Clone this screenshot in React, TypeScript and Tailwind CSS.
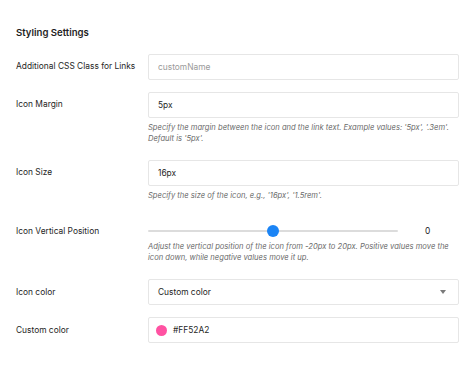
import React, { useState } from 'react';

const Help = ({ children }: { children: React.ReactNode }) => (
  <p className="text-[7.6px] italic leading-[11px] text-[#6b6b6b]">{children}</p>
);

const Row = ({ label, children, className = '' }: { label: string; children: React.ReactNode; className?: string }) => (
  <div className={`flex h-[26px] items-center ${className}`}>
    <label className="w-[132px] shrink-0 text-[8.4px] leading-[11px] text-[#1e1e1e]">{label}</label>
    <div className="flex-1">{children}</div>
  </div>
);

export default function App() {
  const [position, setPosition] = useState(0);
  const pct = ((position + 20) / 40) * 100;

  return (
    <div className="w-[474px] h-[376px] bg-white pl-4 pr-[15px] pt-[25px]" style={{ fontFamily: 'Inter, "Liberation Sans", sans-serif' }}>
      <h2 className="text-[9.6px] font-semibold leading-4 text-[#1e1e1e]">Styling Settings</h2>

      <Row label="Additional CSS Class for Links" className="mt-3">
        <input
          className="h-[26px] w-full rounded-[2px] border border-[#e6e6e6] px-[9px] text-[8.4px] text-[#1e1e1e] placeholder:text-[#9a9a9a] outline-none"
          placeholder="customName"
        />
      </Row>

      <Row label="Icon Margin" className="mt-3">
        <input
          className="h-[26px] w-full rounded-[2px] border border-[#e6e6e6] px-[9px] text-[8.4px] text-[#1e1e1e] outline-none"
          defaultValue="5px"
        />
      </Row>
      <div className="ml-[132px] mt-[5px]">
        <Help>Specify the margin between the icon and the link text. Example values: '5px', '.3em'. Default is '5px'.</Help>
      </div>

      <Row label="Icon Size" className="mt-[15px]">
        <input
          className="h-[26px] w-full rounded-[2px] border border-[#e6e6e6] px-[9px] text-[8.4px] text-[#1e1e1e] outline-none"
          defaultValue="16px"
        />
      </Row>
      <div className="ml-[132px] mt-[5px]">
        <Help>Specify the size of the icon, e.g., '16px', '1.5rem'.</Help>
      </div>

      <div className="mt-[17px] flex h-[26px] items-center">
        <label className="w-[132px] shrink-0 text-[8.4px] leading-[11px] text-[#1e1e1e]">Icon Vertical Position</label>
        <div className="flex h-4 items-center">
          <div className="relative h-4 w-[250px]">
            <div className="absolute left-0 right-0 top-[7px] h-[2px] rounded-full bg-[#dcdcdc]" />
            <div
              className="absolute top-[2px] h-3 w-3 -translate-x-1/2 rounded-full bg-[#1b84f5]"
              style={{ left: `calc(6px + (100% - 12px) * ${pct / 100})` }}
            />
            <input
              type="range"
              min={-20}
              max={20}
              value={position}
              onChange={(e) => setPosition(Number(e.target.value))}
              className="absolute inset-0 w-full opacity-0"
            />
          </div>
          <span className="ml-[27px] text-[8.4px] text-[#1e1e1e]">{position}</span>
        </div>
      </div>
      <div className="ml-[132px] -mt-[3px]">
        <Help>Adjust the vertical position of the icon from -20px to 20px. Positive values move the icon down, while negative values move it up.</Help>
      </div>

      <Row label="Icon color" className="mt-4">
        <div className="flex h-[26px] w-full items-center justify-between rounded-[2px] border border-[#e6e6e6] pl-[9px] pr-[12px]">
          <span className="text-[8.4px] text-[#1e1e1e]">Custom color</span>
          <svg width="6" height="4" viewBox="0 0 6 4">
            <path d="M0 0h6L3 4z" fill="#7a7a7a" />
          </svg>
        </div>
      </Row>

      <Row label="Custom color" className="mt-3">
        <div className="flex h-[26px] w-full items-center gap-[6px] rounded-[2px] border border-[#e6e6e6] pl-[7px]">
          <span className="h-[11px] w-[11px] rounded-full bg-[#FF52A2]" />
          <span className="text-[8.4px] text-[#1e1e1e]">#FF52A2</span>
        </div>
      </Row>
    </div>
  );
}
